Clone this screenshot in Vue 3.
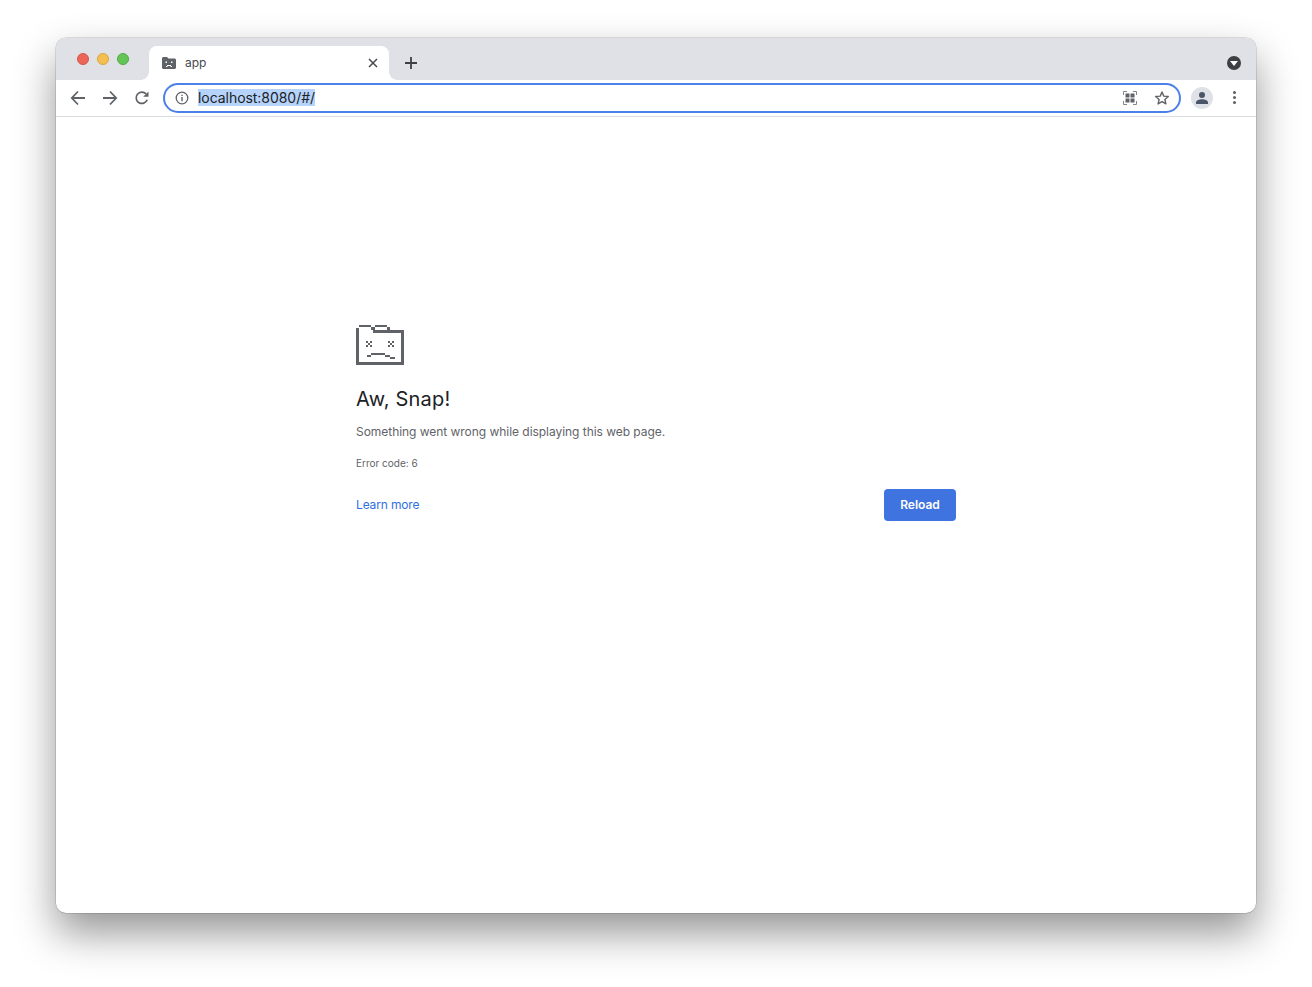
<script setup>
const title = 'Aw, Snap!'
</script>

<template>
  <div class="page">
    <div class="window">
      <div class="tabstrip">
        <div class="lights">
          <span class="light red"></span>
          <span class="light yellow"></span>
          <span class="light green"></span>
        </div>
        <div class="tab">
          <svg class="favicon" width="16" height="16" viewBox="0 0 16 16">
            <path fill="#5f6368" d="M1 3.500C1 2.700 1.700 2 2.500 2H6l1.500 1.500h6c.8 0 1.500.7 1.500 1.500v7.500c0 .8-.7 1.500-1.500 1.500h-11C1.700 14 1 13.300 1 12.500z"/>
            <path fill="#fff" d="M4.500 6.500h1.500V8H4.500zM10 6.500h1.500V8H10zM5 11h1v-1h4v1h1v1H9.500v-1h-3v1H5z"/>
          </svg>
          <span class="tab-title">app</span>
          <svg class="tab-close" width="10" height="10" viewBox="0 0 10 10">
            <path d="M1 1l8 8M9 1l-8 8" stroke="#45484d" stroke-width="1.500" fill="none"/>
          </svg>
        </div>
        <svg class="newtab" width="14" height="14" viewBox="0 0 14 14">
          <path d="M7 1v12M1 7h12" stroke="#3c4043" stroke-width="1.800" fill="none"/>
        </svg>
        <div class="spacer"></div>
        <div class="profile-menu"><span class="tri"></span></div>
      </div>
      <div class="toolbar">
        <svg class="nav" width="16" height="16" viewBox="0 0 16 16">
          <path d="M15 8H2M8 1.500 1.800 8 8 14.500" stroke="#5f6368" stroke-width="1.800" fill="none"/>
        </svg>
        <svg class="nav" width="16" height="16" viewBox="0 0 16 16">
          <path d="M1 8h13M8 1.500 14.200 8 8 14.500" stroke="#5f6368" stroke-width="1.800" fill="none"/>
        </svg>
        <svg class="nav" width="16" height="16" viewBox="0 0 16 16">
          <path d="M13.200 9.800A5.700 5.700 0 1 1 12.100 3.900" stroke="#5f6368" stroke-width="1.700" fill="none"/>
          <path d="M14.500 1.500v5.300H9.200z" fill="#5f6368"/>
        </svg>
        <div class="omnibox">
          <svg class="info" width="14" height="14" viewBox="0 0 14 14">
            <circle cx="7" cy="7" r="5.800" stroke="#5f6368" stroke-width="1.300" fill="none"/>
            <path d="M6.300 6h1.400v4.200H6.300zM6.300 3.700h1.400v1.400H6.300z" fill="#5f6368"/>
          </svg>
          <span class="url">localhost:8080/#/</span>
          <div class="spacer"></div>
          <svg class="qr" width="16" height="16" viewBox="0 0 16 16">
            <path d="M1.500 5V1.500H5M11 1.500h3.500V5M14.500 11v3.500H11M5 14.500H1.500V11" stroke="#80868b" stroke-width="1" fill="none"/>
            <path d="M3.500 3.500h4v4h-4zM8.500 3.500h4v4h-4zM3.500 8.500h4v4h-4zM8.500 8.500h4v4h-4z" fill="#5f6368"/>
          </svg>
          <svg class="star" width="16" height="16" viewBox="0 0 16 16">
            <path d="M8 2l1.800 4.100 4.500.4-3.400 3 1 4.400L8 11.600l-3.900 2.300 1-4.400-3.400-3 4.500-.4z" stroke="#5f6368" stroke-width="1.400" stroke-linejoin="round" fill="none"/>
          </svg>
        </div>
        <div class="avatar">
          <svg width="14" height="14" viewBox="0 0 14 14">
            <circle cx="7" cy="4" r="3" fill="#4a5568"/>
            <path d="M1 13v-1.500C1 9.300 4.500 8.200 7 8.200s6 1.100 6 3.300V13z" fill="#4a5568"/>
          </svg>
        </div>
        <div class="kebab"><i></i><i></i><i></i></div>
      </div>
      <main class="content">
        <div class="error">
          <svg class="sad" width="48" height="40" viewBox="0 0 48 40" shape-rendering="crispEdges">
            <g fill="#5f6368">
              <rect x="3" y="0" width="12" height="2"/>
              <rect x="19" y="0" width="12" height="2"/>
              <rect x="0" y="3" width="3" height="37"/>
              <rect x="15" y="2" width="4" height="3"/>
              <rect x="31" y="2" width="3" height="3"/>
              <rect x="17" y="5" width="31" height="3"/>
              <rect x="45" y="8" width="3" height="32"/>
              <rect x="0" y="37" width="48" height="3"/>
              <rect x="10" y="16" width="2" height="2"/><rect x="14" y="16" width="2" height="2"/>
              <rect x="12" y="18" width="2" height="2"/>
              <rect x="10" y="20" width="2" height="2"/><rect x="14" y="20" width="2" height="2"/>
              <rect x="32" y="16" width="2" height="2"/><rect x="36" y="16" width="2" height="2"/>
              <rect x="34" y="18" width="2" height="2"/>
              <rect x="32" y="20" width="2" height="2"/><rect x="36" y="20" width="2" height="2"/>
              <rect x="11" y="30" width="4" height="2"/>
              <rect x="15" y="28" width="14" height="2"/>
              <rect x="29" y="30" width="5" height="2"/>
              <rect x="34" y="32" width="5" height="2"/>
            </g>
          </svg>
          <h1 class="title">{{ title }}</h1>
          <p class="message">Something went wrong while displaying this web page.</p>
          <p class="code">Error code: 6</p>
          <div class="actions">
            <a class="learn">Learn more</a>
            <button class="reload">Reload</button>
          </div>
        </div>
      </main>
    </div>
  </div>
</template>

<style>
html, body { margin: 0; background: #fff; }
</style>

<style scoped>
.page {
  width: 1312px;
  height: 987px;
  box-sizing: border-box;
  padding: 38px 56px 74px;
  overflow: hidden;
  font-family: Inter, "Liberation Sans", sans-serif;
}
.window {
  height: 875px;
  border-radius: 10px;
  background: #fff;
  overflow: hidden;
  display: flex;
  flex-direction: column;
  box-shadow: 0 0 0 .5px rgba(0,0,0,.22), 0 20px 42px 0 rgba(0,0,0,.42);
}
.tabstrip {
  height: 42px;
  flex: none;
  background: #dfe1e6;
  display: flex;
  align-items: flex-end;
}
.lights { display: flex; gap: 8px; width: 93px; box-sizing: border-box; padding: 0 0 15px 21px; }
.light { width: 12px; height: 12px; border-radius: 50%; box-sizing: border-box; }
.red { background: #ec6559; border: .5px solid #d1574d; }
.yellow { background: #f4bf4f; border: .5px solid #d9a63f; }
.green { background: #62c554; border: .5px solid #53a948; }
.tab {
  position: relative;
  width: 240px;
  height: 34px;
  box-sizing: border-box;
  background: #fff;
  border-radius: 8px 8px 0 0;
  display: flex;
  align-items: center;
  padding: 0 11px 0 12px;
  font-size: 12px;
  color: #45484d;
}
.tab::before, .tab::after {
  content: "";
  position: absolute;
  bottom: 0;
  width: 8px;
  height: 8px;
  background: radial-gradient(circle at 0 0, transparent 7.500px, #fff 8px);
}
.tab::before { left: -8px; }
.tab::after { right: -8px; background: radial-gradient(circle at 100% 0, transparent 7.500px, #fff 8px); }
.favicon { flex: none; }
.tab-title { margin: 0 0 2px 8px; flex: 1; }
.tab-close { flex: none; }
.newtab { margin: 0 0 10px 15px; }
.spacer { flex: 1; }
.profile-menu {
  width: 14px;
  height: 14px;
  border-radius: 50%;
  background: #3c4043;
  margin: 0 15px 10px 0;
  display: flex;
  align-items: center;
  justify-content: center;
}
.tri {
  width: 0;
  height: 0;
  border-left: 4px solid transparent;
  border-right: 4px solid transparent;
  border-top: 5px solid #fff;
}
.toolbar {
  height: 37px;
  flex: none;
  box-sizing: border-box;
  border-bottom: 1px solid #dadce0;
  display: flex;
  align-items: center;
  padding: 0 0 1px 14px;
}
.nav { flex: none; margin-right: 16px; }
.toolbar .nav:nth-child(3) { margin-right: 13px; }
.omnibox {
  width: 1018px;
  height: 30px;
  box-sizing: border-box;
  border: 2px solid #4a80e8;
  border-radius: 15px;
  display: flex;
  align-items: center;
  padding: 0 9px 0 10px;
  flex: none;
}
.info { flex: none; }
.url {
  margin-left: 9px;
  background: #b6d4fb;
  color: #202124;
  font-size: 14px;
  line-height: 17px;
  letter-spacing: -.05px;
}
.qr { margin-right: 16px; }
.avatar {
  width: 22px;
  height: 22px;
  border-radius: 50%;
  background: #dee1e6;
  margin-left: 10px;
  display: flex;
  align-items: center;
  justify-content: center;
}
.kebab {
  display: flex;
  flex-direction: column;
  gap: 2px;
  margin-left: 20px;
}
.kebab i { width: 3px; height: 3px; border-radius: 50%; background: #5f6368; }
.content { flex: 1; padding: 208px 0 0 300px; }
.error { width: 600px; }
.sad { display: block; }
.title {
  margin: 22px 0 0;
  font-size: 20px;
  font-weight: 400;
  line-height: 24px;
  letter-spacing: .2px;
  color: #202124;
}
.message {
  margin: 12px 0 0;
  font-size: 12px;
  line-height: 18px;
  letter-spacing: -.04px;
  color: #5f6368;
}
.code {
  margin: 15px 0 0;
  font-size: 10px;
  line-height: 14px;
  color: #5f6368;
}
.actions {
  margin-top: 19px;
  display: flex;
  align-items: center;
  justify-content: space-between;
}
.learn { font-size: 12px; color: #2f6fe4; margin-bottom: 2px; letter-spacing: -.15px; }
.reload {
  width: 72px;
  height: 32px;
  border: 0;
  border-radius: 4px;
  background: #3f74e0;
  color: #fff;
  font: 600 12px Inter, "Liberation Sans", sans-serif;
  padding: 0 0 1px;
}
</style>
